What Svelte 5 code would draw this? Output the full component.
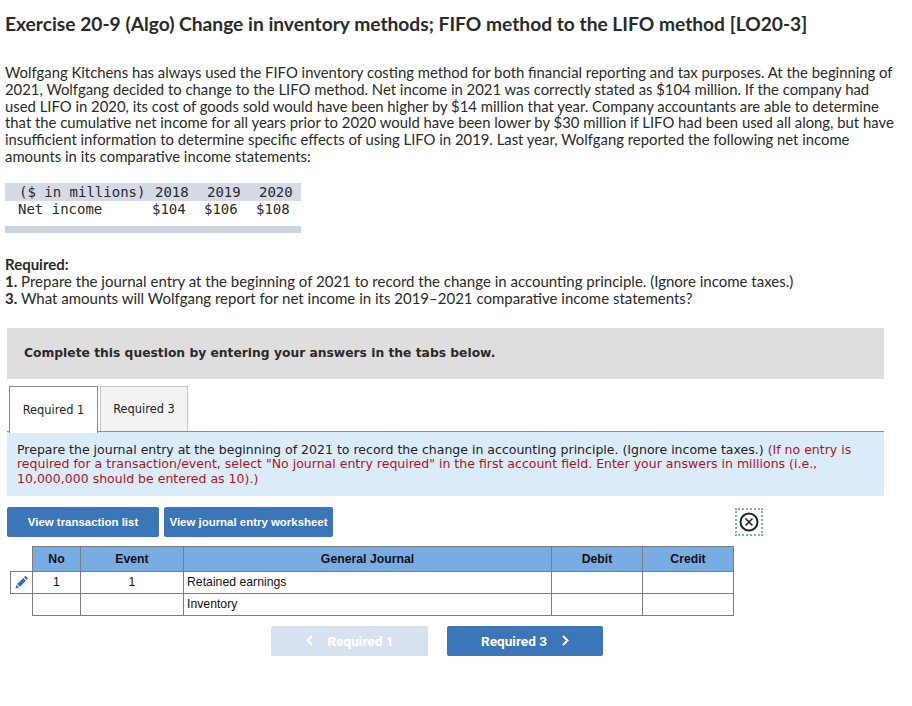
<script lang="ts">
	const rows = [
		{ no: '1', event: '1', account: 'Retained earnings', edit: true },
		{ no: '', event: '', account: 'Inventory', edit: false }
	];
</script>

<main class="page">
	<h1 class="title">Exercise 20-9 (Algo) Change in inventory methods; FIFO method to the LIFO method [LO20-3]</h1>

	<p class="intro">
		Wolfgang Kitchens has always used the FIFO inventory costing method for both financial reporting and tax purposes. At the beginning of 2021, Wolfgang decided to change to the LIFO method. Net income in 2021 was correctly stated as $104 million. If the company had used LIFO in 2020, its cost of goods sold would have been higher by $14 million that year. Company accountants are able to determine that the cumulative net income for all years prior to 2020 would have been lower by $30 million if LIFO had been used all along, but have insufficient information to determine specific effects of using LIFO in 2019. Last year, Wolfgang reported the following net income amounts in its comparative income statements:
	</p>

	<div class="data">
		<div class="data-row head">
			<span>($ in millions)</span><span>2018</span><span>2019</span><span>2020</span>
		</div>
		<div class="data-row body">
			<span>Net income</span><span>$104</span><span>$106</span><span>$108</span>
		</div>
		<div class="bar"></div>
	</div>

	<div class="required">
		<strong>Required:</strong>
		<p><strong>1.</strong> Prepare the journal entry at the beginning of 2021 to record the change in accounting principle. (Ignore income taxes.)</p>
		<p><strong>3.</strong> What amounts will Wolfgang report for net income in its 2019–2021 comparative income statements?</p>
	</div>

	<div class="banner">Complete this question by entering your answers in the tabs below.</div>

	<div class="tabs">
		<div class="tab active">Required 1</div>
		<div class="tab">Required 3</div>
	</div>

	<div class="prompt">
		Prepare the journal entry at the beginning of 2021 to record the change in accounting principle. (Ignore income taxes.) <span class="red">(If no entry is required for a transaction/event, select "No journal entry required" in the first account field. Enter your answers in millions (i.e., 10,000,000 should be entered as 10).)</span>
	</div>

	<div class="actions">
		<button class="btn first">View transaction list</button>
		<button class="btn second">View journal entry worksheet</button>
		<div class="close">
			<svg width="20" height="20" viewBox="0 0 20 20" fill="none" stroke="#222">
				<circle cx="10" cy="10" r="8.5" stroke-width="2" />
				<path d="M6.5 6.5l7 7M13.5 6.5l-7 7" stroke-width="1.6" />
			</svg>
		</div>
	</div>

	<table class="journal">
		<thead>
			<tr>
				<td class="gutter"></td>
				<th class="c-no">No</th>
				<th class="c-event">Event</th>
				<th class="c-acct">General Journal</th>
				<th class="c-amt">Debit</th>
				<th class="c-amt">Credit</th>
			</tr>
		</thead>
		<tbody>
			{#each rows as row}
				<tr>
					<td class="gutter" class:edit={row.edit}>
						{#if row.edit}
							<svg width="13" height="13" viewBox="0 0 14 14" fill="#2f6fb5">
								<path d="M0.5 13.5l1-4 3 3z" />
								<path d="M2.3 8.6l6.5-6.5 3 3-6.5 6.5z" />
								<path d="M9.6 1.3l1-1c.4-.3.8-.3 1.1 0l1.9 1.9c.3.3.3.7 0 1l-1 1z" />
							</svg>
						{/if}
					</td>
					<td class="center">{row.no}</td>
					<td class="center">{row.event}</td>
					<td>{row.account}</td>
					<td></td>
					<td></td>
				</tr>
			{/each}
		</tbody>
	</table>

	<div class="nav">
		<button class="nav-btn prev">
			<svg width="7" height="11" viewBox="0 0 7 11" fill="none" stroke="#fff" stroke-width="2"><path d="M6 1L1.5 5.5 6 10" /></svg>
			Required 1
		</button>
		<button class="nav-btn next">
			Required 3
			<svg width="7" height="11" viewBox="0 0 7 11" fill="none" stroke="#fff" stroke-width="2"><path d="M1 1l4.5 4.5L1 10" /></svg>
		</button>
	</div>
</main>

<style>
	:global(body) {
		margin: 0;
		background: #fff;
	}

	.page {
		width: 912px;
		height: 706px;
		overflow: hidden;
		color: #2a2a2a;
		font-family: Lato, 'Open Sans', sans-serif;
	}

	.title {
		margin: 12px 0 0 5px;
		font-size: 19.2px;
		line-height: 24px;
		font-weight: 700;
	}

	.intro {
		margin: 28px 12px 0 5px;
		font-size: 14.85px;
		line-height: 16.8px;
	}

	.data {
		margin: 18px 0 0 5px;
		width: 296px;
		font-family: 'DejaVu Sans Mono', monospace;
		font-size: 14px;
	}

	.data-row {
		display: grid;
		grid-template-columns: 136px 52px 52px 52px;
		height: 18px;
		line-height: 18px;
		padding-left: 14px;
	}

	.head {
		background: #d5dae6;
	}

	.body {
		padding-left: 13px;
		grid-template-columns: 134px 52px 52px 52px;
		line-height: 16px;
	}

	.bar {
		height: 7px;
		margin-top: 7px;
		background: #ccd4e2;
	}

	.required {
		margin: 23px 0 0 5px;
		font-size: 15px;
		line-height: 17px;
	}

	.required p {
		margin: 0;
	}

	.banner {
		margin: 21px 0 0 7px;
		width: 860px;
		height: 51px;
		padding-left: 17px;
		display: flex;
		align-items: center;
		background: #dedede;
		font-family: 'DejaVu Sans', sans-serif;
		font-size: 12.3px;
		font-weight: 700;
	}

	.tabs {
		display: flex;
		gap: 2px;
		margin: 7px 0 0 9px;
		height: 45px;
	}

	.tab {
		display: flex;
		align-items: center;
		justify-content: center;
		width: 86px;
		border: 1px solid #c8c8c8;
		border-bottom: none;
		background: #f3f3f3;
		font-family: 'DejaVu Sans', sans-serif;
		font-size: 11.4px;
		color: #222;
	}

	.tab.active {
		width: 87px;
		position: relative;
		z-index: 1;
		height: 46px;
		border-color: #8a8a8a;
		background: #fff;
	}

	.prompt {
		margin-left: 7px;
		width: 857px;
		height: 53px;
		padding: 11px 10px 0;
		border-top: 1px solid #8f8f8f;
		background: #daebf9;
		font-family: 'DejaVu Sans', sans-serif;
		font-size: 12.53px;
		line-height: 14.7px;
		color: #222;
	}

	.red {
		color: #b5121b;
	}

	.actions {
		display: flex;
		align-items: center;
		margin: 11px 0 0 7px;
		height: 30px;
	}

	.btn {
		height: 30px;
		padding: 0;
		border: none;
		border-radius: 2px;
		background: #3a76b8;
		color: #fff;
		font-family: 'Liberation Sans', sans-serif;
		font-size: 11.45px;
		font-weight: 700;
	}

	.first {
		width: 152px;
	}

	.second {
		width: 169px;
		margin-left: 5px;
	}

	.close {
		display: flex;
		align-items: center;
		justify-content: center;
		width: 28px;
		height: 28px;
		margin-left: 402px;
		box-sizing: border-box;
		border: 2px dotted #7fa9dc;
	}

	.journal {
		margin: 9px 0 0 10px;
		border-collapse: collapse;
		table-layout: fixed;
		width: 724px;
		font-family: 'Liberation Sans', sans-serif;
		font-size: 12.25px;
		color: #111;
	}

	.journal th,
	.journal td {
		box-sizing: border-box;
		border: 1px solid #7d7d7d;
		padding: 0 3px;
		height: 22px;
	}

	.journal th {
		height: 25px;
		background: #7aace4;
		font-weight: 700;
	}

	.journal .gutter {
		width: 22px;
		padding: 0;
		border: none;
		border-right: 1px solid #7d7d7d;
	}

	.journal .gutter.edit {
		border: 1px solid #7d7d7d;
		text-align: center;
		line-height: 0;
	}

	.c-no {
		width: 48px;
	}

	.c-event {
		width: 103px;
	}

	.c-acct {
		width: 368px;
	}

	.c-amt {
		width: 91px;
	}

	.center {
		text-align: center;
	}

	.nav {
		display: flex;
		gap: 19px;
		margin: 10px 0 0 271px;
	}

	.nav-btn {
		display: flex;
		align-items: center;
		justify-content: center;
		gap: 15px;
		height: 30px;
		padding: 0;
		border: none;
		border-radius: 2px;
		color: #fff;
		font-family: Roboto, sans-serif;
		font-size: 13.6px;
		font-weight: 700;
	}

	.prev {
		width: 157px;
		background: #d7e2f0;
	}

	.next {
		width: 156px;
		background: #3a76b8;
	}
</style>
